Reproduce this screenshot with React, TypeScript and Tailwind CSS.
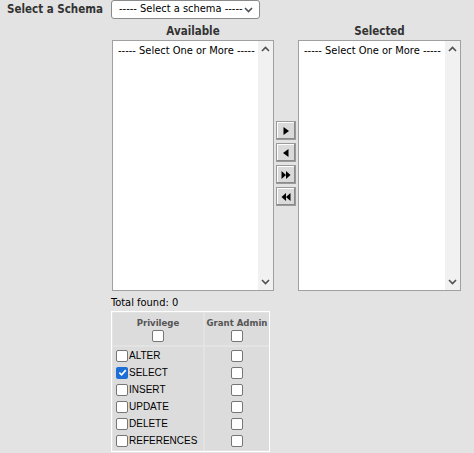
import React from "react";

const ui = { fontFamily: '"DejaVu Sans Condensed", "Noto Sans", sans-serif' };
const arial = { fontFamily: '"Liberation Sans", Arial, sans-serif' };

const privileges = ["ALTER", "SELECT", "INSERT", "UPDATE", "DELETE", "REFERENCES"];

const Box = ({ checked = false }: { checked?: boolean }) =>
  checked ? (
    <span className="inline-flex h-[12px] w-[12px] shrink-0 items-center justify-center rounded-[2px] bg-[#1b6fd6]">
      <svg width="9" height="9" viewBox="0 0 10 10">
        <path d="M1.5 5.2 L4 7.6 L8.6 2.4" fill="none" stroke="white" strokeWidth="1.8" />
      </svg>
    </span>
  ) : (
    <span className="inline-block h-[12px] w-[12px] shrink-0 rounded-[2px] border border-[#767676] bg-white" />
  );

const Chevron = ({ up }: { up?: boolean }) => (
  <svg width="9" height="6" viewBox="0 0 9 6">
    <path
      d={up ? "M1 5 L4.5 1.5 L8 5" : "M1 1 L4.5 4.5 L8 1"}
      fill="none"
      stroke="#505050"
      strokeWidth="1.6"
    />
  </svg>
);

const ListBox = () => (
  <div className="flex h-[251px] border border-[#a0a0a0] bg-white">
    <div className="flex-1 overflow-hidden whitespace-nowrap pl-[5px] pt-[3px] text-[11px] leading-[13px] text-black">
      ----- Select One or More -----
    </div>
    <div className="flex w-[15px] flex-col items-center justify-between bg-[#f1f1f1] py-[5px]">
      <Chevron up />
      <Chevron />
    </div>
  </div>
);

const MoveButton = ({ d }: { d: string }) => (
  <button className="flex h-[19px] w-[20px] items-center justify-center border border-[#9a9a9a] bg-[#dadada] shadow-[inset_-1px_-1px_0_#8a8a8a,inset_1px_1px_0_#ffffff]">
    <svg width="12" height="10" viewBox="0 0 12 10">
      <path d={d} fill="black" />
    </svg>
  </button>
);

export default function App() {
  return (
    <div className="h-[453px] w-[474px] overflow-hidden bg-[#e3e3e3] text-[#333]" style={ui}>
      <div className="flex h-[19px] items-center">
        <span className="w-[111px] whitespace-nowrap pl-[7px] text-[11.5px] font-bold">Select a Schema</span>
        <div className="flex h-[19px] w-[149px] items-center justify-between rounded-[3px] border border-[#8a8a8a] bg-white pl-[7px] pr-[6px] text-[11px] text-black">
          <span className="whitespace-nowrap">----- Select a schema -----</span>
          <Chevron />
        </div>
      </div>

      <div className="mt-[3px] flex pl-[112px]">
        <div className="w-[162px]">
          <div className="h-[18px] text-center text-[11.5px] font-bold leading-[18px]">Available</div>
          <ListBox />
        </div>
        <div className="flex w-[24px] flex-col items-center gap-[3px] pt-[99px]">
          <MoveButton d="M3.5 1 L9 5 L3.5 9 Z" />
          <MoveButton d="M8.5 1 L3 5 L8.5 9 Z" />
          <MoveButton d="M1.5 1 L6 5 L1.5 9 Z M6 1 L10.5 5 L6 9 Z" />
          <MoveButton d="M10.5 1 L6 5 L10.5 9 Z M6 1 L1.5 5 L6 9 Z" />
        </div>
        <div className="w-[163px]">
          <div className="h-[18px] text-center text-[11.5px] font-bold leading-[18px]">Selected</div>
          <ListBox />
        </div>
      </div>

      <div className="mt-[5px] pl-[111px] text-[11px] leading-[13px] text-black">Total found: 0</div>

      <div className="ml-[111px] mt-[2px] w-[159px] border border-white p-[1px]">
        <div className="grid grid-cols-[90px_64px] gap-[2px]">
          <div className="flex h-[32px] flex-col items-center justify-center gap-[2px] bg-[#dcdcdc]">
            <span className="whitespace-nowrap text-[9.5px] font-bold leading-[11px] text-[#555]">Privilege</span>
            <Box />
          </div>
          <div className="flex h-[32px] flex-col items-center justify-center gap-[2px] bg-[#dcdcdc]">
            <span className="whitespace-nowrap text-[9.5px] font-bold leading-[11px] text-[#555]">Grant Admin</span>
            <Box />
          </div>
          <div className="flex flex-col bg-[#dcdcdc] pb-[1px] pl-[3px]" style={arial}>
            {privileges.map((p) => (
              <div key={p} className="flex h-[17px] items-center gap-[1px] text-[10px] text-black">
                <Box checked={p === "SELECT"} />
                <span>{p}</span>
              </div>
            ))}
          </div>
          <div className="flex flex-col items-center bg-[#dcdcdc] pb-[1px]">
            {privileges.map((p) => (
              <div key={p} className="flex h-[17px] items-center">
                <Box />
              </div>
            ))}
          </div>
        </div>
      </div>
    </div>
  );
}
